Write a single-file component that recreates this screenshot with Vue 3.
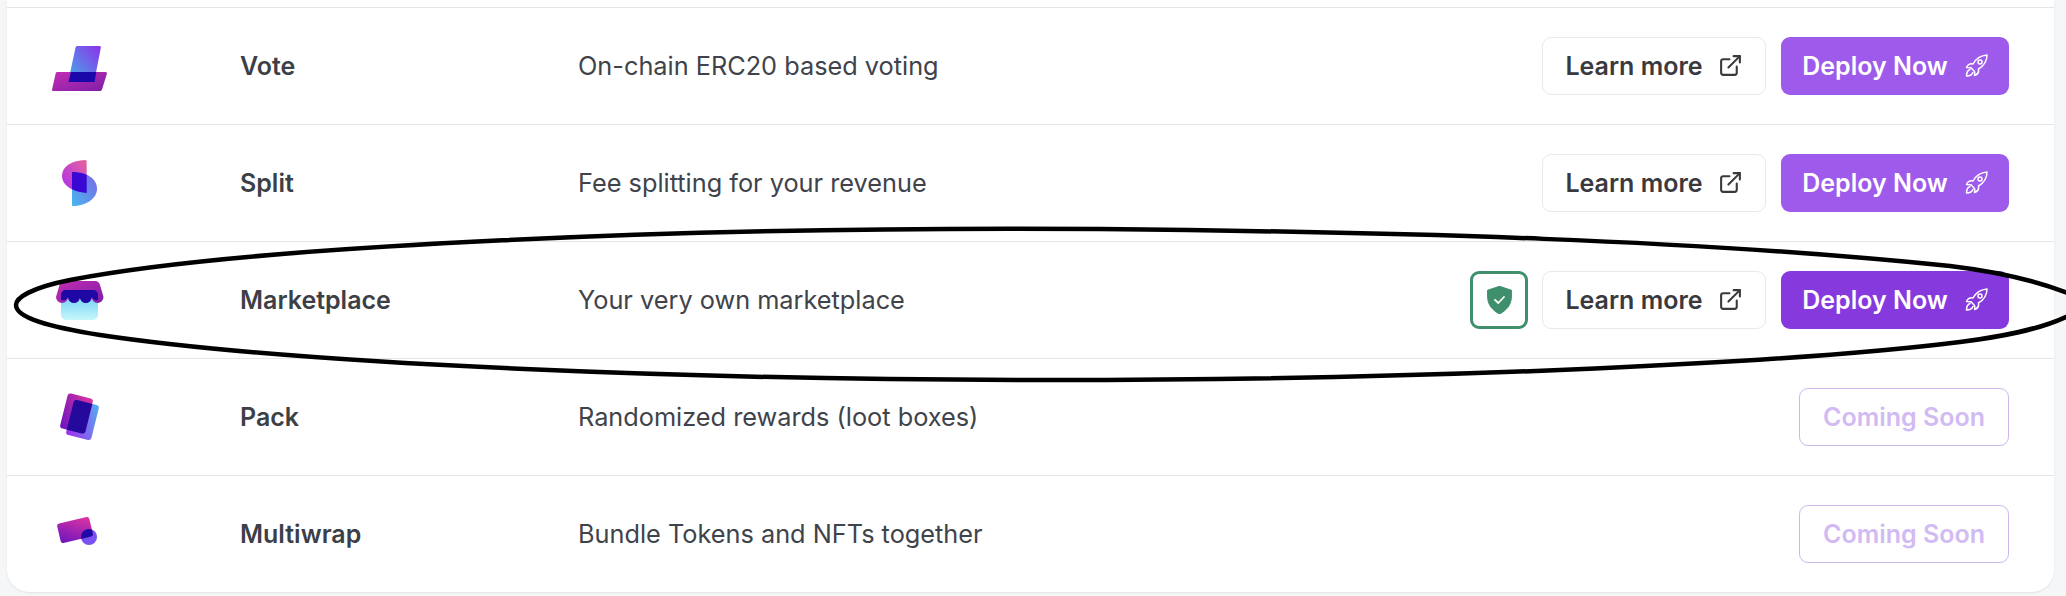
<script setup>
const rows = [
  { id: 'vote', name: 'Vote', desc: 'On-chain ERC20 based voting', view: '44 30 72 72', actions: 'deploy' },
  { id: 'split', name: 'Split', desc: 'Fee splitting for your revenue', view: '44 147 72 72', actions: 'deploy' },
  { id: 'market', name: 'Marketplace', desc: 'Your very own marketplace', view: '44 264 72 72', actions: 'audited' },
  { id: 'pack', name: 'Pack', desc: 'Randomized rewards (loot boxes)', view: '44 381 72 72', actions: 'soon' },
  { id: 'wrap', name: 'Multiwrap', desc: 'Bundle Tokens and NFTs together', view: '44 498 72 72', actions: 'soon' },
]
</script>

<template>
  <div class="page">
    <svg width="0" height="0" class="defs">
      <defs>
        <linearGradient id="pink" x1="1" y1="0" x2="0" y2="1">
          <stop offset="0" stop-color="#e0359f" />
          <stop offset="1" stop-color="#6a14c0" />
        </linearGradient>
        <linearGradient id="magenta" x1="0" y1="0" x2="1" y2="1">
          <stop offset="0" stop-color="#c52cb4" />
          <stop offset="1" stop-color="#7c1fa6" />
        </linearGradient>
        <linearGradient id="blue" x1="0" y1="1" x2="1" y2="0">
          <stop offset="0" stop-color="#3fb2ea" />
          <stop offset="1" stop-color="#8f30e8" />
        </linearGradient>
        <linearGradient id="packback" x1="1" y1="0" x2="0" y2="1">
          <stop offset="0" stop-color="#52aef0" />
          <stop offset="1" stop-color="#a22cee" />
        </linearGradient>
        <linearGradient id="splitTop" x1="0" y1="1" x2="1" y2="0">
          <stop offset="0" stop-color="#a92cf0" />
          <stop offset="1" stop-color="#e8649a" />
        </linearGradient>
        <linearGradient id="splitBot" x1="1" y1="0" x2="0" y2="1">
          <stop offset="0" stop-color="#7f62e8" />
          <stop offset="1" stop-color="#48b8ee" />
        </linearGradient>
        <linearGradient id="sky" x1="0" y1="0" x2="0" y2="1">
          <stop offset="0" stop-color="#62cdf6" />
          <stop offset="1" stop-color="#c8f7fb" />
        </linearGradient>
        <clipPath id="voteClip"><path d="M77 46H101L94.500 82H68.500Z" /></clipPath>
        <clipPath id="splitClip"><path d="M72 172C86 172 97 178 97 189C97 199 85 206 72 206Z" /></clipPath>
        <clipPath id="packClip"><rect x="69.500" y="402" width="26" height="36" rx="3" transform="rotate(14 82.500 420)" /></clipPath>
        <clipPath id="wrapClip"><circle cx="89" cy="537" r="8" /></clipPath>
      </defs>
    </svg>

    <section class="card">
      <div class="stub"></div>
      <div v-for="row in rows" :key="row.id" class="row">
        <svg class="logo" :viewBox="row.view" width="72" height="72">
          <template v-if="row.id === 'vote'">
            <path d="M77.500 46H99.500C100.500 46 101 46.800 100.800 47.700L94.500 80.500C94.300 81.500 93.500 82 92.500 82H70.500C69 82 68.300 81 68.600 80L75.500 47.500C75.700 46.600 76.500 46 77.500 46Z" fill="url(#blue)" />
            <path d="M57.500 72H105.500C106.500 72 107.200 72.800 106.900 73.700L102 89.500C101.700 90.400 101 91 100 91H53.500C52.500 91 51.700 90.200 52.100 89.200L55.700 73.300C56 72.500 56.600 72 57.500 72Z" fill="url(#magenta)" />
            <path d="M57.500 72H105.500C106.500 72 107.200 72.800 106.900 73.700L102 89.500C101.700 90.400 101 91 100 91H53.500C52.500 91 51.700 90.200 52.100 89.200L55.700 73.300C56 72.500 56.600 72 57.500 72Z" fill="#1a08ab" clip-path="url(#voteClip)" />
          </template>
          <template v-else-if="row.id === 'split'">
            <path d="M85 160C86 160 86.700 160.700 86.700 161.500V193C74 192 62 186 62 176C62 166 72 160.500 85 160Z" fill="url(#splitTop)" />
            <path d="M72 172C86 172 97 178 97 189C97 199 85 206 73 206C72.300 206 72 205.500 72 205Z" fill="url(#splitBot)" />
            <path d="M85 160C86 160 86.700 160.700 86.700 161.500V193C74 192 62 186 62 176C62 166 72 160.500 85 160Z" fill="#3a08d2" clip-path="url(#splitClip)" />
          </template>
          <template v-else-if="row.id === 'market'">
            <rect x="61" y="292" width="37" height="28" rx="5" fill="url(#sky)" />
            <path d="M65 281H95C98 281 99.500 283 100 285L103.500 297A5.900 5.900 0 0 1 91.700 297A5.900 5.900 0 0 1 79.900 297A5.900 5.900 0 0 1 68 297A5.900 5.900 0 0 1 56 297L59.500 285C60.200 283 62 281 65 281Z" fill="url(#magenta)" />
            <path d="M66 290H93C96 290 98 292 98 295V300A5.900 5.900 0 0 1 91.700 297A5.900 5.900 0 0 1 79.900 297A5.900 5.900 0 0 1 68 297A5.900 5.900 0 0 1 61 300V295C61 292 63 290 66 290Z" fill="#1f07a6" />
          </template>
          <template v-else-if="row.id === 'pack'">
            <rect x="69.500" y="402" width="26" height="36" rx="3" transform="rotate(14 82.500 420)" fill="url(#packback)" />
            <rect x="63.500" y="395.500" width="26" height="36" rx="3" transform="rotate(14 76.500 413.500)" fill="url(#pink)" />
            <g clip-path="url(#packClip)">
              <rect x="63.500" y="395.500" width="26" height="36" rx="3" transform="rotate(14 76.500 413.500)" fill="#24099c" />
            </g>
          </template>
          <template v-else>
            <circle cx="89" cy="537" r="8" fill="#7a52f2" />
            <rect x="58.500" y="520" width="33" height="20" rx="2.500" transform="rotate(-13 75 530)" fill="url(#pink)" />
            <g clip-path="url(#wrapClip)">
              <rect x="58.500" y="520" width="33" height="20" rx="2.500" transform="rotate(-13 75 530)" fill="#1f0aa8" />
            </g>
          </template>
        </svg>

        <div class="name">{{ row.name }}</div>
        <div class="desc">{{ row.desc }}</div>

        <div class="actions">
          <template v-if="row.actions === 'soon'">
            <span class="btn soon">Coming Soon</span>
          </template>
          <template v-else>
            <span v-if="row.actions === 'audited'" class="audit">
              <svg viewBox="0 0 25 28" width="25" height="28">
                <path d="M12.500 0.300L24.500 4.300C24.800 13 24.800 21.500 12.500 28C0.200 21.500 0.200 13 0.500 4.300Z" fill="#3f8f6d" stroke="#3f8f6d" stroke-linejoin="round" />
                <path d="M8 13.800L11.300 17L17 11" fill="none" stroke="#fff" stroke-width="1.800" stroke-linecap="round" stroke-linejoin="round" />
              </svg>
            </span>
            <span class="btn learn">
              Learn more
              <svg class="ico" viewBox="0 0 24 24" width="25" height="25" fill="none" stroke="currentColor" stroke-width="2" stroke-linecap="round" stroke-linejoin="round">
                <path d="M18 13v6a2 2 0 0 1-2 2H5a2 2 0 0 1-2-2V8a2 2 0 0 1 2-2h6" />
                <path d="M15 3h6v6" />
                <path d="M10 14 21 3" />
              </svg>
            </span>
            <span class="btn deploy" :class="{ active: row.actions === 'audited' }">
              Deploy Now
              <svg class="ico" viewBox="0 0 23 23" width="23" height="23" fill="none" stroke="currentColor" stroke-width="1.500" stroke-linecap="round" stroke-linejoin="round">
                <path d="M22 1C16 1.500 11 4.500 8 10C5.500 9.500 3 10.500 1.500 13.500L6 13.700L9.500 17.500C10 18.500 10 20 9.500 21.500C12.500 20.500 14 18 13.500 15C18.500 12 22 7 22 1Z" />
                <circle cx="15" cy="8" r="2" />
                <path d="M5 15.500C2.500 16.500 1.500 19 1.500 22C4.500 22 7 21 8 18.500" />
              </svg>
            </span>
          </template>
        </div>
      </div>
    </section>

    <svg class="scribble" viewBox="0 0 2066 596" width="2066" height="596">
      <path d="M2070 294C2040 282 2000 272 1950 266C1700 240 1400 232 1100 229C700 226 250 245 70 280C30 288 16 298 16 305C16 318 50 327 100 335C300 365 700 380 1050 380C1450 380 1800 362 1960 342C2000 337 2040 330 2070 315" fill="none" stroke="#000" stroke-width="4.500" stroke-linecap="round" />
    </svg>
  </div>
</template>

<style>
body { background: #f5f6f8; }
</style>

<style scoped>
.page {
  position: relative;
  width: 2066px;
  height: 596px;
  overflow: hidden;
  background: #f5f6f8;
  padding: 0 12px 0 7px;
  box-sizing: border-box;
  font-family: Inter, "Liberation Sans", sans-serif;
}
.defs { position: absolute; }
.card {
  background: #fff;
  border-radius: 0 0 22px 22px;
  box-shadow: 0 1px 2px rgba(0, 0, 0, 0.08);
  height: 592px;
  overflow: hidden;
}
.stub { height: 7px; }
.row {
  height: 117px;
  box-sizing: border-box;
  border-top: 1px solid #e5e6e8;
  display: grid;
  grid-template-columns: 196px 338px 1fr auto;
  align-items: center;
  padding: 0 45px 1px 37px;
}
.logo { display: block; }
.name {
  font-size: 25px;
  font-weight: 600;
  color: #3c3f46;
}
.desc {
  font-size: 25.3px;
  font-weight: 400;
  color: #40434a;
}
.actions {
  display: flex;
  align-items: center;
}
.btn {
  height: 58px;
  box-sizing: border-box;
  border-radius: 9px;
  display: flex;
  align-items: center;
  justify-content: center;
  font-size: 25px;
  font-weight: 600;
}
.learn {
  width: 224px;
  border: 1px solid #e8e9eb;
  color: #3a3a3e;
  gap: 15px;
  margin-right: 15px;
}
.deploy {
  width: 228px;
  background: #9d5aeb;
  color: #fff;
  gap: 17px;
}
.deploy.active { background: #8639dd; }
.soon {
  width: 210px;
  border: 1px solid #cdb8ea;
  color: #d2baf3;
}
.audit {
  width: 58px;
  height: 58px;
  box-sizing: border-box;
  border: 3px solid #3f8f6d;
  border-radius: 9px;
  display: flex;
  align-items: center;
  justify-content: center;
  margin-right: 14px;
}
.scribble {
  position: absolute;
  left: 0;
  top: 0;
  pointer-events: none;
}
</style>
